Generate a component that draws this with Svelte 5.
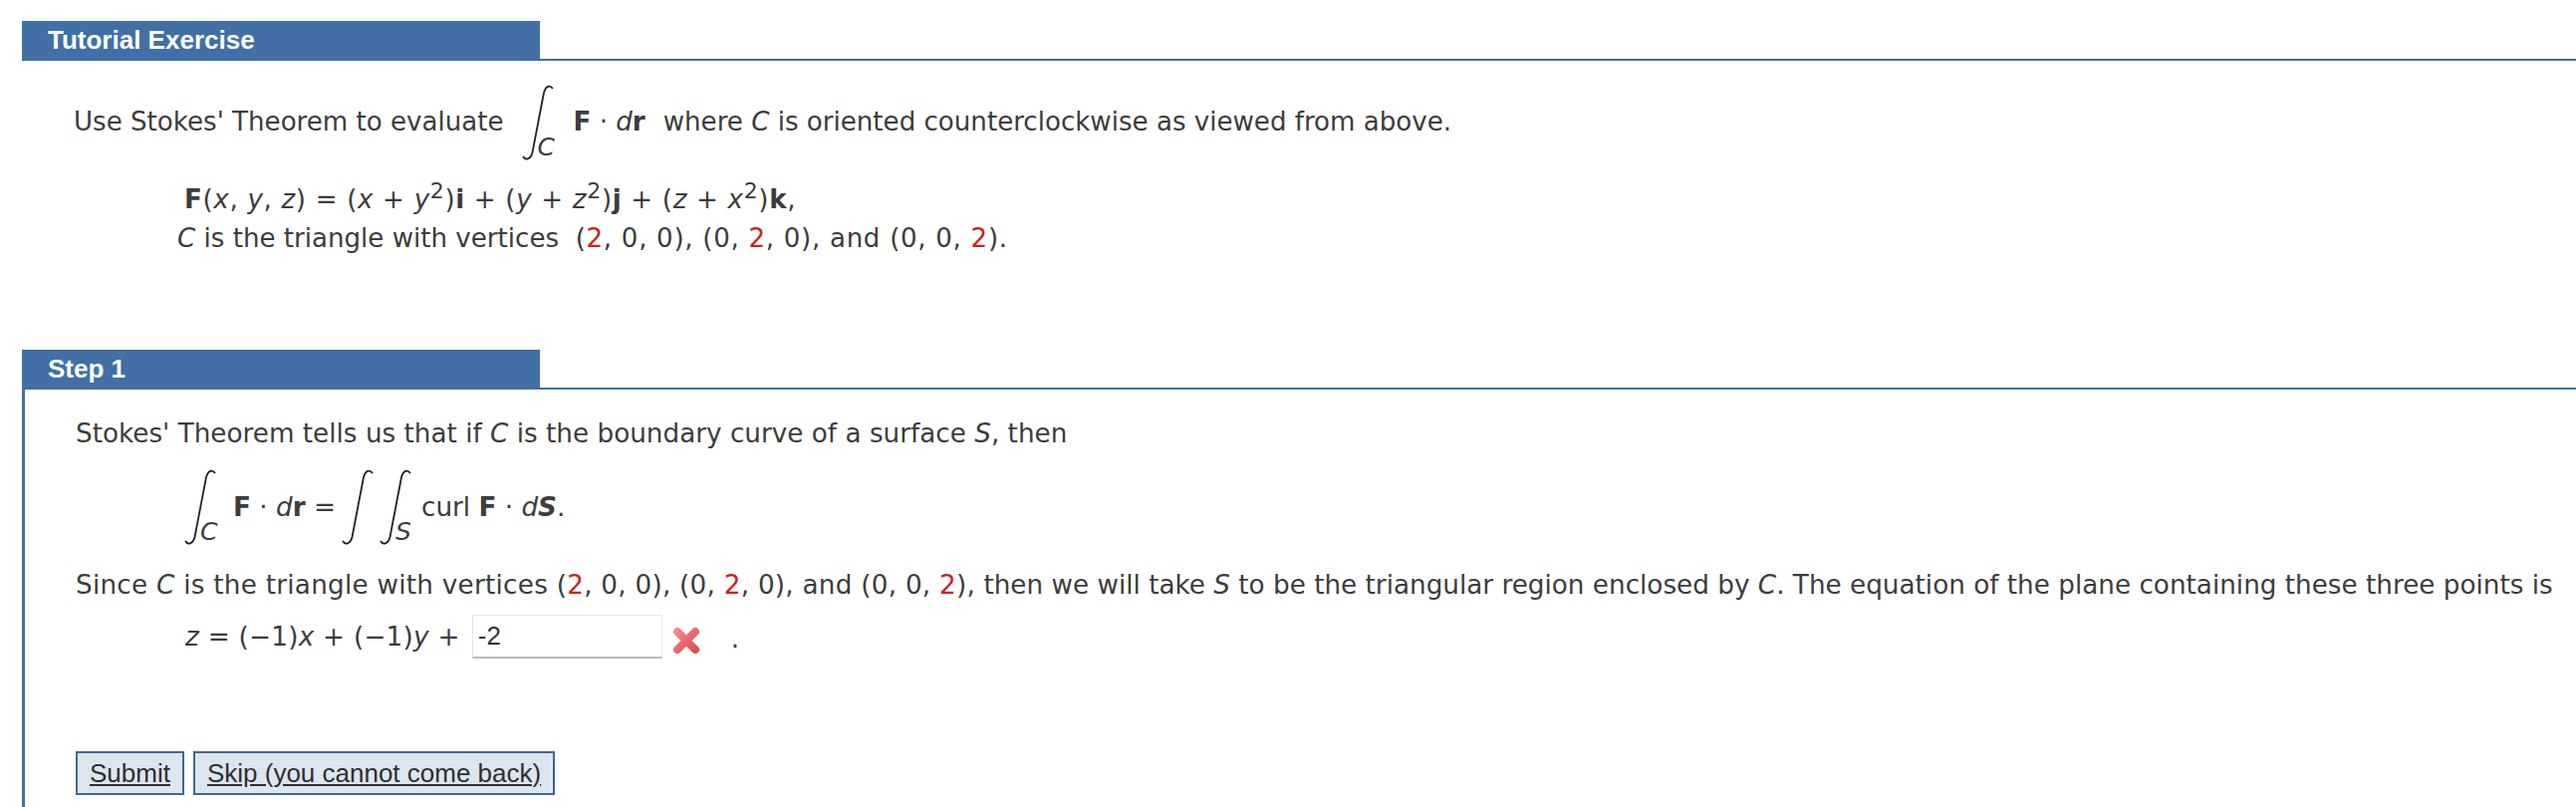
<script>
	let pageTitle = 'Tutorial Exercise';
	let stepTitle = 'Step 1';
</script>

<div class="page">
	<section class="exercise">
		<header class="head">
			<h2 class="tab">{pageTitle}</h2>
			<div class="rule"></div>
		</header>
		<div class="body intro">
			<div class="row first">
				<span>Use Stokes' Theorem to evaluate</span>
				<span class="int one">
					<svg width="32" height="76" viewBox="0 0 32 76"><path d="M31 4C28 0 24 1 22 8L10.500 68C9 74 4 77 1 72" /></svg>
					<i class="sub">C</i>
				</span>
				<span class="expr"><b>F</b> · <i>d</i><b>r</b></span>
				<span class="where">where <i>C</i> is oriented counterclockwise as viewed from above.</span>
			</div>
			<p class="eq">
				<b>F</b>(<i>x</i>, <i>y</i>, <i>z</i>) = (<i>x</i> + <i>y</i><sup>2</sup>)<b>i</b> + (<i>y</i> + <i>z</i><sup>2</sup>)<b>j</b> + (<i>z</i> + <i>x</i><sup>2</sup>)<b>k</b>,
			</p>
			<p class="eq second">
				<i>C</i> is the triangle with vertices &nbsp;<span class="tuples">(<em>2</em>, 0, 0), (0, <em>2</em>, 0), and (0, 0, <em>2</em>).</span>
			</p>
		</div>
	</section>

	<section class="step">
		<header class="head">
			<h2 class="tab">{stepTitle}</h2>
			<div class="rule"></div>
		</header>
		<div class="body framed">
			<p class="lead">Stokes' Theorem tells us that if <i>C</i> is the boundary curve of a surface <i>S</i>, then</p>
			<div class="row formula">
				<span class="int">
					<svg width="32" height="76" viewBox="0 0 32 76"><path d="M31 4C28 0 24 1 22 8L10.500 68C9 74 4 77 1 72" /></svg>
					<i class="sub">C</i>
				</span>
				<span class="expr small"><b>F</b> · <i>d</i><b>r</b> =</span>
				<span class="int dbl">
					<svg width="32" height="76" viewBox="0 0 32 76"><path d="M31 4C28 0 24 1 22 8L10.500 68C9 74 4 77 1 72" /></svg>
				</span>
				<span class="int">
					<svg width="32" height="76" viewBox="0 0 32 76"><path d="M31 4C28 0 24 1 22 8L10.500 68C9 74 4 77 1 72" /></svg>
					<i class="sub">S</i>
				</span>
				<span class="expr curl">curl <b>F</b> · <i>d</i><b><i>S</i></b>.</span>
			</div>
			<p class="since">
				<span class="early">Since <i>C</i> is the triangle with vertices (<em>2</em>, 0, 0), (0, <em>2</em>, 0), and (0, 0, <em>2</em>),</span> then we will take <i>S</i> to be the triangular region enclosed by <i>C</i>. The equation of the plane containing these three points is
			</p>
			<div class="row answer">
				<span class="plane"><i>z</i> = (−1)<i>x</i> + (−1)<i>y</i> +</span>
				<input class="field" type="text" value="-2" />
				<svg class="wrong" width="28" height="28" viewBox="0 0 28 28">
					<defs>
						<linearGradient id="red" gradientUnits="userSpaceOnUse" x1="3" y1="3" x2="25" y2="25">
							<stop offset="0" stop-color="#f28a90" />
							<stop offset="1" stop-color="#e0484e" />
						</linearGradient>
					</defs>
					<path d="M5 5L23 23M23 5L5 23" fill="none" stroke="url(#red)" stroke-width="8" stroke-linecap="round" />
				</svg>
				<span class="dot">.</span>
			</div>
			<div class="buttons">
				<button class="btn">Submit</button>
				<button class="btn">Skip (you cannot come back)</button>
			</div>
		</div>
	</section>
</div>

<style>
	:global(body) {
		margin: 0;
		background: #fff;
	}

	.page {
		padding: 21px 0 0 22px;
		height: 789px;
		overflow: hidden;
		font-family: 'DejaVu Sans', Verdana, sans-serif;
		font-size: 26.25px;
		color: #3c3c3c;
	}

	.head {
		display: flex;
		align-items: flex-end;
		height: 40px;
	}

	.tab {
		width: 494px;
		height: 40px;
		margin: 0;
		padding-left: 26px;
		background: #416fa6;
		color: #fff;
		font-family: 'Liberation Sans', Arial, sans-serif;
		font-size: 26px;
		font-weight: bold;
		line-height: 38px;
	}

	.rule {
		flex: 1;
		border-bottom: 2px solid #416fa6;
	}

	.body {
		padding-left: 52px;
	}

	.intro {
		font-size: 26.1px;
	}

	.row {
		display: flex;
		align-items: center;
	}

	.first {
		height: 76px;
		margin-top: 24px;
		align-items: flex-start;
		line-height: 75px;
	}

	.int {
		position: relative;
		display: block;
		width: 32px;
		height: 76px;
	}

	.int svg {
		display: block;
	}

	.int path {
		fill: none;
		stroke: #222;
		stroke-width: 1.8;
	}

	.sub {
		position: absolute;
		left: 16px;
		bottom: 0;
		font-size: 25px;
		line-height: 26px;
	}

	.one {
		margin-left: 18px;
	}

	.expr {
		margin-left: 20px;
	}

	.where {
		margin-left: 18px;
	}

	p {
		margin: 0;
	}

	em {
		font-style: normal;
		color: #c8221c;
	}

	sup {
		font-size: 22px;
		line-height: 0;
	}

	.eq {
		margin-top: 20px;
		padding-left: 111px;
		line-height: 39px;
		letter-spacing: 0.67px;
	}

	.second {
		margin-top: 0;
		padding-left: 104px;
		letter-spacing: 0;
	}

	.tuples {
		letter-spacing: 0.7px;
	}

	.step {
		margin-top: 92px;
	}

	.framed {
		padding-left: 51px;
		border-left: 3px solid #416fa6;
		height: 500px;
	}

	.lead {
		padding-top: 26px;
		line-height: 36px;
	}

	.formula {
		height: 76px;
		margin-top: 18px;
		padding-left: 109px;
	}

	.small {
		margin-left: 17px;
	}

	.dbl {
		margin-left: 6px;
		margin-right: 6px;
	}

	.curl {
		margin-left: 10px;
	}

	.since {
		margin-top: 22px;
		line-height: 36px;
		white-space: nowrap;
	}

	.early {
		letter-spacing: 0.25px;
	}

	.answer {
		margin-top: 12px;
		padding-left: 110px;
		height: 44px;
	}

	.plane {
		letter-spacing: 0.25px;
	}

	.field {
		width: 191px;
		height: 44px;
		box-sizing: border-box;
		margin-left: 12px;
		padding: 0 5px;
		border: 1px solid #e6e6e6;
		border-bottom: 2px solid #bbb;
		border-radius: 0;
		outline: none;
		font-family: 'Liberation Sans', Arial, sans-serif;
		font-size: 26px;
		color: #333;
	}

	.wrong {
		margin-left: 10px;
		margin-top: 7px;
	}

	.dot {
		margin-left: 31px;
		margin-top: 4px;
	}

	.buttons {
		display: flex;
		gap: 9px;
		margin-top: 93px;
	}

	.btn {
		height: 44px;
		padding: 0 12px;
		border: 2px solid #3e6797;
		border-radius: 0;
		background: #dce6f0;
		color: #2e2e2e;
		font-family: 'Liberation Sans', Arial, sans-serif;
		font-size: 26px;
		text-decoration: underline;
	}
</style>
